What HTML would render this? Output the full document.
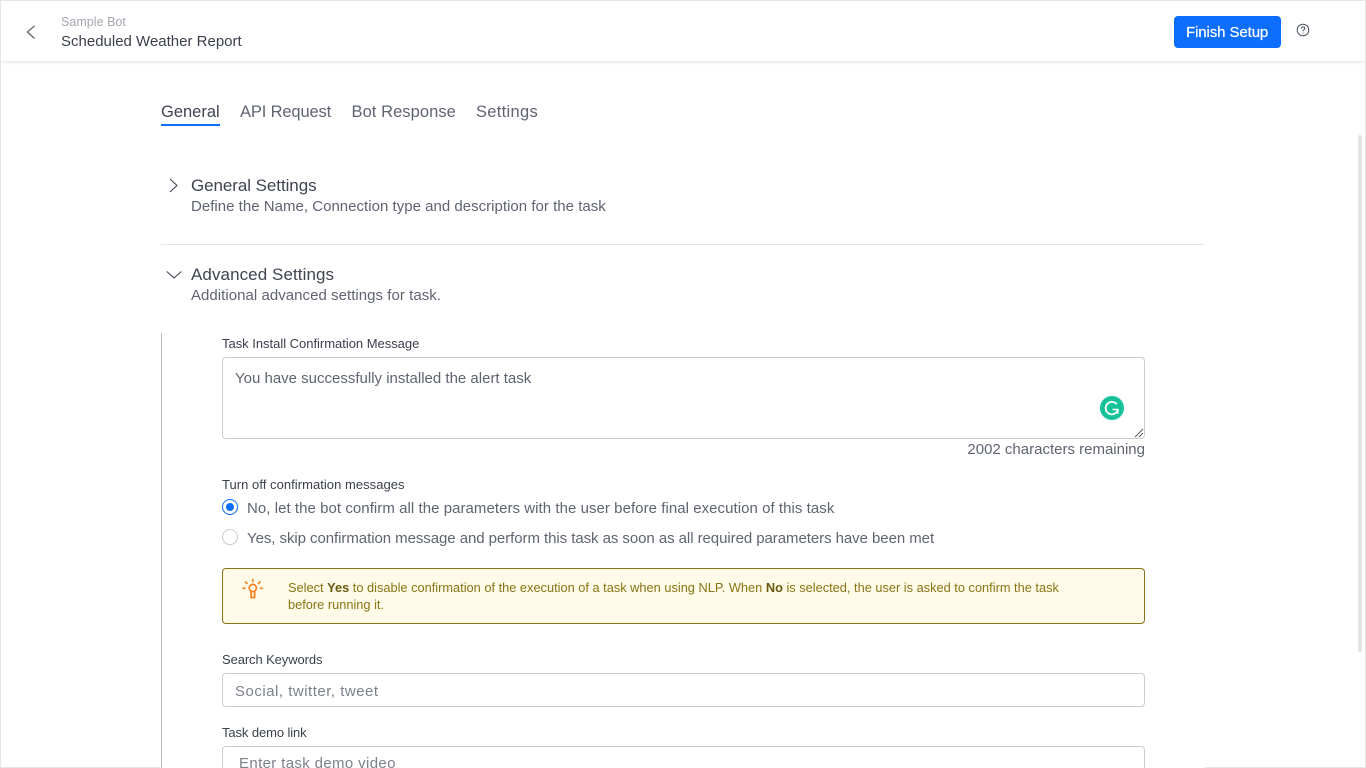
<!DOCTYPE html>
<html><head><meta charset="utf-8"><style>
html,body{margin:0;padding:0;width:1366px;height:768px;overflow:hidden;background:#fff}
body{position:relative;font-family:"Liberation Sans",sans-serif}
.t{position:absolute;white-space:nowrap;line-height:20px}
.b{position:absolute;box-sizing:border-box}
.h{font-size:17px;color:#3f4450}
.s{font-size:15px;color:#5f6470}
.l{font-size:13px;color:#3a3f4a}
.tab{font-size:16.500px;color:#5f6470;top:102px}
</style></head><body>
<div class="b" style="left:0;top:0;width:1366px;height:61px;background:#fff;border-top:1px solid #e4e5e7;box-shadow:0 1px 4px rgba(0,0,0,.12)"></div>
<div class="b" style="left:0;top:0;width:1px;height:768px;background:#e4e5e7"></div>
<div class="b" style="left:1365px;top:0;width:1px;height:768px;background:#e4e5e7"></div>
<div class="b" style="left:0;top:767px;width:162px;height:1px;background:#e4e5e7"></div>
<div class="b" style="left:1205px;top:767px;width:161px;height:1px;background:#e4e5e7"></div>
<div class="b" style="left:1358px;top:135px;width:4px;height:517px;background:#e4e5e7;border-radius:2px"></div>

<svg style="position:absolute;left:24px;top:24px" width="14" height="16" viewBox="0 0 14 16" fill="none" stroke="#5f6470" stroke-width="1.300"><path d="M10.500 1.800L3.500 8L10.500 14.500"/></svg>
<div class="t" style="left:61px;top:12px;font-size:12.500px;color:#a2a6ad;letter-spacing:.03px">Sample Bot</div>
<div class="t" style="left:61px;top:32px;font-size:15px;color:#3a3f4a">Scheduled Weather Report</div>

<div class="b" style="left:1174px;top:16px;width:107px;height:32px;background:#0d6efd;border-radius:4px"></div>
<div class="t" style="left:1186px;top:23px;font-size:15px;color:#fff;letter-spacing:-.1px;-webkit-text-stroke:.2px #fff">Finish Setup</div>
<svg style="position:absolute;left:1296px;top:23px" width="14" height="14" viewBox="0 0 14 14" fill="none" stroke="#4a4f5a" stroke-width="1"><circle cx="7" cy="7" r="5.800"/><path d="M5.300 5.500C5.300 3.400 8.800 3.400 8.800 5.500C8.800 6.800 7 6.800 7 8.300"/><path d="M7 9.600V10.600"/></svg>

<div class="t tab" style="left:161px;color:#3f4450">General</div>
<div class="b" style="left:161px;top:124px;width:59px;height:2px;background:#0d6efd"></div>
<div class="t tab" style="left:240px;letter-spacing:-.14px">API Request</div>
<div class="t tab" style="left:351.500px;letter-spacing:.06px">Bot Response</div>
<div class="t tab" style="left:476px;letter-spacing:.3px">Settings</div>

<svg style="position:absolute;left:166px;top:177px" width="14" height="16" viewBox="0 0 14 16" fill="none" stroke="#3f4450" stroke-width="1.100"><path d="M4 2L11 8.500L4 15"/></svg>
<div class="t h" style="left:191px;top:176px;letter-spacing:-.07px">General Settings</div>
<div class="t s" style="left:191px;top:197px;letter-spacing:.02px">Define the Name, Connection type and description for the task</div>
<div class="b" style="left:161px;top:244px;width:1044px;height:1px;background:#e4e5e7"></div>

<svg style="position:absolute;left:166px;top:267px" width="16" height="14" viewBox="0 0 16 14" fill="none" stroke="#3f4450" stroke-width="1.100"><path d="M.800 4.500L8 11L15.200 4.500"/></svg>
<div class="t h" style="left:191px;top:265px;letter-spacing:.08px">Advanced Settings</div>
<div class="t s" style="left:191px;top:286px;letter-spacing:.04px">Additional advanced settings for task.</div>

<div class="b" style="left:161px;top:333px;width:1px;height:435px;background:#b9bcc1"></div>

<div class="t l" style="left:222px;top:334px;letter-spacing:-.02px">Task Install Confirmation Message</div>
<div class="b" style="left:222px;top:357px;width:923px;height:82px;border:1px solid #c9cbd0;border-radius:4px"></div>
<div class="t s" style="left:235px;top:369px">You have successfully installed the alert task</div>
<svg style="position:absolute;left:1100px;top:396px" width="24" height="24" viewBox="0 0 24 24" fill="none"><circle cx="12" cy="12" r="12" fill="#15c39a"/><path d="M16.700 8.200A6.200 6.200 0 1 0 17.600 14.500" stroke="#fff" stroke-width="1.800"/><path d="M12.500 13.500H17.800V17.800" stroke="#fff" stroke-width="1.600"/></svg>
<svg style="position:absolute;left:1134px;top:428px" width="10" height="10" viewBox="0 0 10 10" stroke="#555" stroke-width=".9"><path d="M1 9L9 1M5 9L9 5"/></svg>
<div class="t s" style="right:221px;top:440px">2002 characters remaining</div>

<div class="t l" style="left:222px;top:475px;letter-spacing:.04px">Turn off confirmation messages</div>
<div class="b" style="left:222px;top:499px;width:16px;height:16px;border:1.500px solid #0d6efd;border-radius:50%"></div>
<div class="b" style="left:226px;top:503px;width:8px;height:8px;background:#0d6efd;border-radius:50%"></div>
<div class="t s" style="left:247px;top:499px;letter-spacing:.05px">No, let the bot confirm all the parameters with the user before final execution of this task</div>
<div class="b" style="left:222px;top:529px;width:16px;height:16px;border:1px solid #c9cbd0;border-radius:50%"></div>
<div class="t s" style="left:247px;top:529px;letter-spacing:-.06px">Yes, skip confirmation message and perform this task as soon as all required parameters have been met</div>

<div class="b" style="left:222px;top:568px;width:923px;height:56px;background:#fefbe8;border:1px solid #8a7414;border-radius:4px"></div>
<svg style="position:absolute;left:242px;top:578px" width="22" height="22" viewBox="0 0 22 22" fill="none" stroke="#f58220" stroke-width="1.700"><circle cx="10.800" cy="10" r="3.600"/><path d="M9 13.500V19.500H12.600V13.500"/><path d="M10.800 1.500V3.500M3.500 4L5 5.500M18 4L16.500 5.500M1 10.300H3M18.500 10.300H20.500" stroke-linecap="round"/></svg>
<div class="t" style="left:288px;top:578px;font-size:12.800px;color:#8a7414">Select <b style="color:#6b5a0e">Yes</b> to disable confirmation of the execution of a task when using NLP. When <b style="color:#6b5a0e">No</b> is selected, the user is asked to confirm the task</div>
<div class="t" style="left:288px;top:595px;font-size:12.800px;color:#8a7414">before running it.</div>

<div class="t l" style="left:222px;top:650px;letter-spacing:-.1px">Search Keywords</div>
<div class="b" style="left:222px;top:673px;width:923px;height:34px;border:1px solid #c9cbd0;border-radius:4px"></div>
<div class="t" style="left:235px;top:682px;font-size:15px;color:#7d818a;letter-spacing:.5px">Social, twitter, tweet</div>

<div class="t l" style="left:222px;top:723px;letter-spacing:-.1px">Task demo link</div>
<div class="b" style="left:222px;top:746px;width:923px;height:34px;border:1px solid #c9cbd0;border-radius:4px"></div>
<div class="t" style="left:239px;top:754px;font-size:15px;color:#7d818a;letter-spacing:.36px">Enter task demo video</div>
</body></html>
